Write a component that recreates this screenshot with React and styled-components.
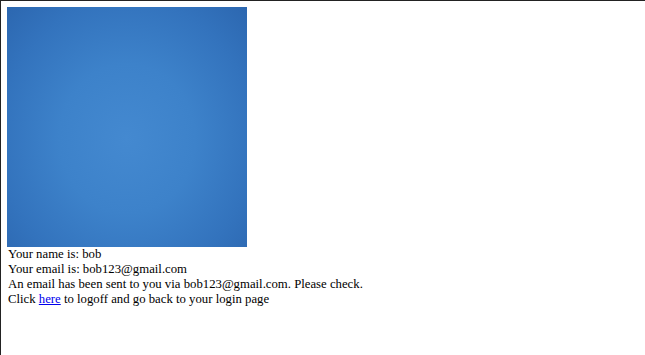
import styled, { createGlobalStyle } from "styled-components";

const GlobalStyle = createGlobalStyle`
  html {
    border-top: 1px solid #222;
    border-left: 1px solid #222;
    min-height: 100vh;
    box-sizing: border-box;
  }
  body {
    margin: 6px;
    font-family: "Liberation Serif", "Times New Roman", serif;
    font-size: 12.75px;
    line-height: 15px;
    color: #000;
  }
`;

const Page = styled.div`
  display: flex;
  flex-direction: column;
  align-items: flex-start;
`;

// stand-in for the blue picture
const Picture = styled.div`
  width: 240px;
  height: 240px;
  background: radial-gradient(
    ellipse at 50% 55%,
    #4489d0 0%,
    #3d82ca 40%,
    #3373bd 75%,
    #2c67b0 100%
  );
`;

const Line = styled.div`
  padding-left: 1px;
`;

const Anchor = styled.a`
  color: #0000ee;
  text-decoration: underline;
`;

export default function App() {
  const name = "bob";
  const email = "bob123@gmail.com";

  return (
    <>
      <GlobalStyle />
      <Page>
        <Picture />
        <Line>Your name is: {name}</Line>
        <Line>Your email is: {email}</Line>
        <Line>An email has been sent to you via {email}. Please check.</Line>
        <Line>
          Click <Anchor href="#">here</Anchor> to logoff and go back to your login page
        </Line>
      </Page>
    </>
  );
}
